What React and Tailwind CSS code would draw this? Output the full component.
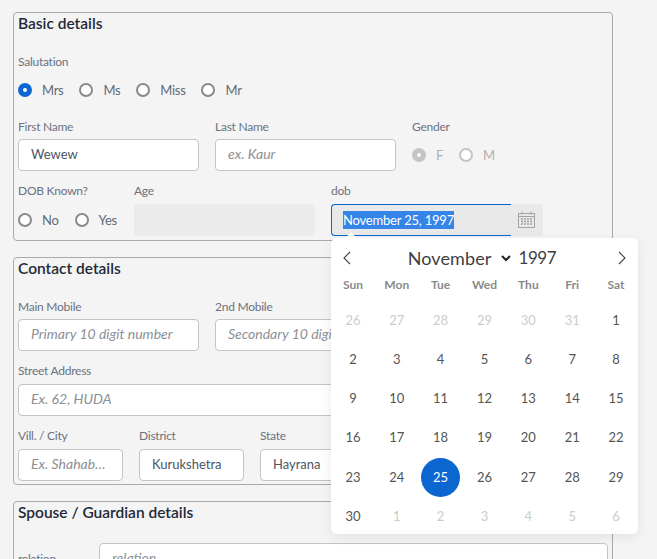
import React from 'react';

const weekdays = ['Sun', 'Mon', 'Tue', 'Wed', 'Thu', 'Fri', 'Sat'];

const days = [
  ['26', '27', '28', '29', '30', '31', '1'],
  ['2', '3', '4', '5', '6', '7', '8'],
  ['9', '10', '11', '12', '13', '14', '15'],
  ['16', '17', '18', '19', '20', '21', '22'],
  ['23', '24', '25', '26', '27', '28', '29'],
  ['30', '1', '2', '3', '4', '5', '6'],
];

function Label({ children, className = '' }) {
  return <div className={`text-[12px] leading-[16px] tracking-[-0.25px] text-[#6b7280] ${className}`}>{children}</div>;
}

function Radio({ label, checked, disabled }) {
  const ring = disabled ? 'border-[#c4c4c4]' : 'border-[#8a8a8a]';
  return (
    <div className="flex items-center gap-[10px]">
      {checked ? (
        <span className={`w-[14px] h-[14px] rounded-full flex items-center justify-center ${disabled ? 'bg-[#c4c4c4]' : 'bg-[#0b66d0]'}`}>
          <span className="w-[4px] h-[4px] rounded-full bg-white" />
        </span>
      ) : (
        <span className={`w-[14px] h-[14px] rounded-full border-2 bg-white ${ring}`} />
      )}
      <span className={`text-[13px] leading-[18px] tracking-[-0.3px] ${disabled ? 'text-[#b0b0b0]' : 'text-[#5f6b7a]'}`}>{label}</span>
    </div>
  );
}

function Field({ label, value, placeholder, className = 'w-[181px]', labelGap = 'mb-[4px]' }) {
  return (
    <div className={className}>
      <Label className={labelGap}>{label}</Label>
      <div className="h-[32px] bg-white border border-[#c4c4c4] rounded-[4px] pl-[12px] flex items-center overflow-hidden whitespace-nowrap">
        {value ? (
          <span className="text-[13px] text-[#4b5563]">{value}</span>
        ) : (
          <span className="text-[14px] leading-[18px] mb-[3px] italic text-[#8b8f96]">{placeholder}</span>
        )}
      </div>
    </div>
  );
}

function Section({ title, className = '', children }) {
  return (
    <section className={`border border-[#aaaaaa] rounded-[4px] pl-[4px] pr-[4px] ${className}`}>
      <h2 className="text-[15.5px] leading-[20px] font-semibold text-[#1f2937]">{title}</h2>
      {children}
    </section>
  );
}

function CalendarIcon() {
  return (
    <svg width="18" height="18" viewBox="0 0 18 18" fill="none" stroke="#a3a3a3" strokeWidth="1">
      <rect x="0.5" y="2.5" width="16" height="14" />
      <path d="M0.5 5.5h16M4 0.5v3M13 0.5v3" />
      <path d="M3 8h11M3 10.5h11M3 13h11" strokeDasharray="2 1" strokeWidth="1.6" />
    </svg>
  );
}

function DatePopup() {
  return (
    <div className="absolute left-0 top-[34px] w-[307px] h-[296px] bg-white rounded-[6px] shadow-[0_3px_13px_rgba(0,0,0,0.08)] z-10">
      <div className="absolute left-[16px] top-[-4px] w-[8px] h-[8px] bg-white rotate-45" />
      <div className="h-[40px] flex items-center justify-between px-[11px]">
        <svg width="10" height="14" viewBox="0 0 10 14" fill="none" stroke="#444444" strokeWidth="1.1">
          <path d="M8 1L2 7l6 6" />
        </svg>
        <div className="flex items-center text-[#3f3f3f] mr-[5px]">
          <span className="text-[18px] tracking-[0.1px]">November</span>
          <svg className="ml-[10px] mr-[7px]" width="10" height="7" viewBox="0 0 10 7" fill="none" stroke="#222222" strokeWidth="2">
            <path d="M1 1l4 4 4-4" />
          </svg>
          <span className="text-[17px] tracking-[-0.4px]">1997</span>
        </div>
        <svg width="10" height="14" viewBox="0 0 10 14" fill="none" stroke="#444444" strokeWidth="1.1">
          <path d="M2 1l6 6-6 6" />
        </svg>
      </div>
      <div className="grid grid-cols-7 h-[16px] -mt-[1px]">
        {weekdays.map((d) => (
          <div key={d} className="text-center text-[12px] leading-[16px] font-bold text-[#8a8a8a]">{d}</div>
        ))}
      </div>
      <div className="mt-[8px]">
        {days.map((row, r) => (
          <div key={r} className="grid grid-cols-7 h-[39.2px]">
            {row.map((d, c) => {
              const muted = (r === 0 && c < 6) || (r === 5 && c > 0);
              const selected = r === 4 && c === 2;
              return (
                <div key={c} className="flex items-center justify-center">
                  <span className={`w-[39px] h-[39px] rounded-full flex items-center justify-center text-[13px] ${selected ? 'bg-[#0b66d0] text-white' : muted ? 'text-[#cccccc]' : 'text-[#555555]'}`}>
                    {d}
                  </span>
                </div>
              );
            })}
          </div>
        ))}
      </div>
    </div>
  );
}

export default function App() {
  return (
    <div className="h-[559px] overflow-hidden bg-[#f4f4f4] pt-[12px] pl-[13px]" style={{ fontFamily: '"Lato", "Noto Sans", sans-serif' }}>
      <div className="w-[600px]">
        <Section title="Basic details" className="h-[229px]">
          <Label className="mt-[21px]">Salutation</Label>
          <div className="flex gap-[16px] mt-[11px] h-[18px] items-center">
            <Radio label="Mrs" checked />
            <Radio label="Ms" />
            <Radio label="Miss" />
            <Radio label="Mr" />
          </div>
          <div className="flex gap-[16px] mt-[20px]">
            <Field label="First Name" value="Wewew" />
            <Field label="Last Name" placeholder="ex. Kaur" />
            <div className="w-[181px]">
              <Label className="mb-[4px]">Gender</Label>
              <div className="flex gap-[16px] h-[32px] items-center">
                <Radio label="F" checked disabled />
                <Radio label="M" disabled />
              </div>
            </div>
          </div>
          <div className="flex gap-[16px] mt-[12px]">
            <div className="w-[100px]">
              <Label className="mb-[5px]">DOB Known?</Label>
              <div className="flex gap-[16px] h-[32px] items-center">
                <Radio label="No" />
                <Radio label="Yes" />
              </div>
            </div>
            <div className="w-[181px]">
              <Label className="mb-[5px]">Age</Label>
              <div className="h-[32px] bg-[#ebebeb] rounded-[4px]" />
            </div>
            <div className="w-[212px] relative">
              <Label className="mb-[5px]">dob</Label>
              <div className="relative h-[32px] bg-[#e9e9e9] rounded-[4px] flex items-center justify-end pr-[7px]">
                <div className="absolute left-0 top-0 h-[32px] w-[180px] border border-r-0 border-[#0b66d0] rounded-l-[4px] pl-[11px] flex items-center">
                  <span className="bg-[#3584e8] text-white text-[13px] leading-[18px] tracking-[-0.2px] whitespace-nowrap">November 25, 1997</span>
                </div>
                <CalendarIcon />
              </div>
              <div className="absolute left-0 top-[21px]">
                <DatePopup />
              </div>
            </div>
          </div>
        </Section>

        <Section title="Contact details" className="h-[228px] mt-[16px]">
          <div className="flex gap-[16px] mt-[21px]">
            <Field label="Main Mobile" placeholder="Primary 10 digit number" />
            <Field label="2nd Mobile" placeholder="Secondary 10 digit number" />
          </div>
          <div className="mt-[12px]">
            <Field label="Street Address" placeholder="Ex. 62, HUDA" className="w-[590px]" labelGap="mb-[5px]" />
          </div>
          <div className="flex gap-[16px] mt-[12px]">
            <Field label="Vill. / City" placeholder="Ex. Shahab…" className="w-[105px]" labelGap="mb-[5px]" />
            <Field label="District" value="Kurukshetra" className="w-[105px]" labelGap="mb-[5px]" />
            <Field label="State" value="Hayrana" className="w-[105px]" labelGap="mb-[5px]" />
          </div>
        </Section>

        <Section title="Spouse / Guardian details" className="h-[100px] mt-[16px]">
          <div className="flex items-start gap-[14px] mt-[21px]">
            <Label className="w-[67px] mt-[8px]">relation</Label>
            <div className="w-[509px] h-[32px] bg-white border border-[#c4c4c4] rounded-[4px] pl-[12px] flex items-center">
              <span className="text-[14px] leading-[18px] mb-[3px] italic text-[#8b8f96]">relation</span>
            </div>
          </div>
        </Section>
      </div>
    </div>
  );
}
